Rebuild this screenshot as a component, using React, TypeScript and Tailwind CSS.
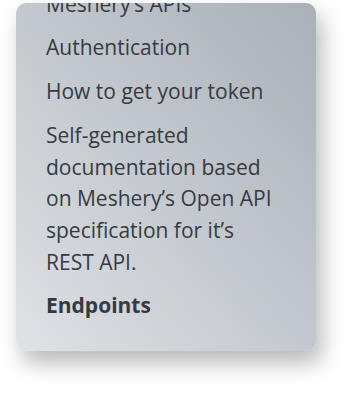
import React from "react";

export default function App() {
  return (
    <div className="w-[351px] h-[393px] bg-white pt-[3px] pl-[16px]" style={{ fontFamily: '"Open Sans", sans-serif' }}>
      <div className="w-[300px] h-[348px] rounded-[10px] overflow-hidden bg-gradient-to-tr from-[#dfe2e6] to-[#a9b0b8] shadow-[6px_12px_22px_rgba(0,0,0,0.28)]">
        <ul className="-mt-[14.5px] px-[30px] flex flex-col gap-[12.3px] text-[21px] leading-[31.6px] text-[#363a40]">
          <li>Meshery’s APIs</li>
          <li>Authentication</li>
          <li>How to get your token</li>
          <li>Self-generated documentation based on Meshery’s Open API specification for it’s REST API.</li>
          <li className="font-bold">Endpoints</li>
        </ul>
      </div>
    </div>
  );
}
